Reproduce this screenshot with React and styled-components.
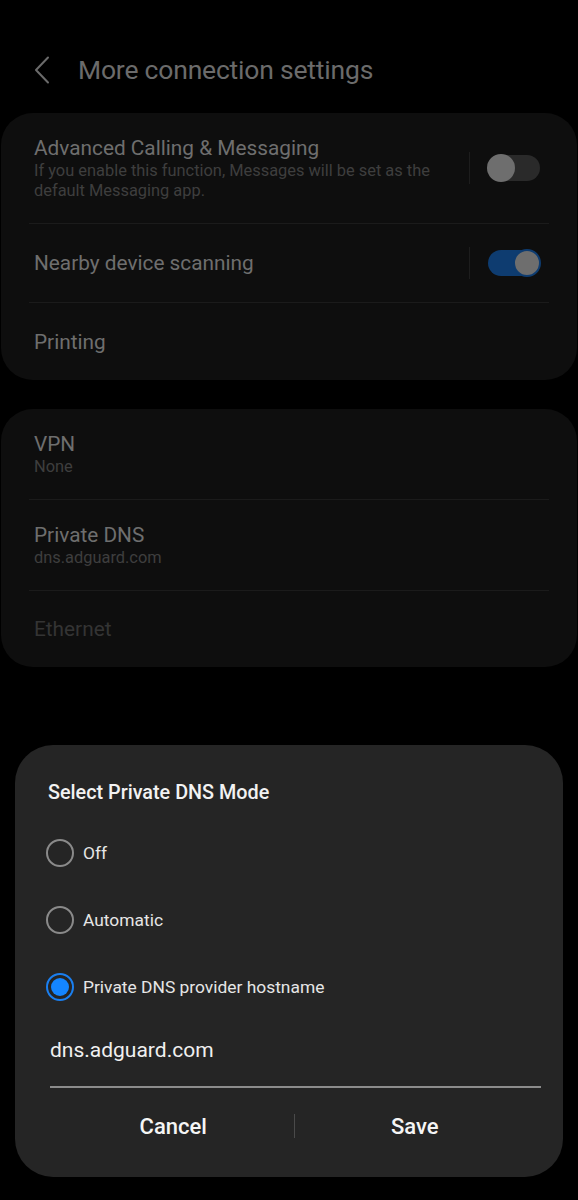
import styled, { createGlobalStyle } from 'styled-components';

const GlobalStyle = createGlobalStyle`
  html, body {
    margin: 0;
    padding: 0;
    background: #000;
  }
  body {
    font-family: Roboto, "Noto Sans", sans-serif;
  }
`;

const Page = styled.div`
  width: 578px;
  min-height: 1200px;
  background: #000;
  display: flex;
  flex-direction: column;
`;

const Header = styled.div`
  height: 113px;
  display: flex;
  align-items: center;
  padding-left: 33px;
  padding-top: 26px;
  box-sizing: border-box;
  gap: 27px;
`;

const Title = styled.h1`
  margin: 0;
  font-size: 26.5px;
  font-weight: 400;
  color: #6b6b6b;
  letter-spacing: -0.2px;
`;

const Card = styled.div`
  margin: ${p => p.mt || 0}px 1px 0;
  background: #0e0e0e;
  border-radius: 32px;
  padding: 0 28px;
  display: flex;
  flex-direction: column;
`;

const Row = styled.div`
  height: ${p => p.h}px;
  display: flex;
  align-items: center;
  border-top: ${p => (p.first ? 'none' : '1px solid #1b1b1b')};
  padding: 0 6px 0 5px;
  box-sizing: border-box;
`;

const RowText = styled.div`
  flex: 1;
  display: flex;
  flex-direction: column;
`;

const Label = styled.div`
  font-size: 20.8px;
  color: ${p => (p.dim ? '#343434' : '#6e6e6e')};
  line-height: 26px;
`;

const Sub = styled.div`
  font-size: 16.4px;
  color: #3e3e3e;
  line-height: 20px;
`;

const Sep = styled.div`
  width: 1px;
  height: 32px;
  background: #1d1d1d;
  margin: 0 18px 0 12px;
`;

const Track = styled.div`
  width: 52px;
  height: 26px;
  border-radius: 13px;
  background: ${p => (p.on ? '#0e3c70' : '#2a2a2a')};
  display: flex;
  align-items: center;
  justify-content: ${p => (p.on ? 'flex-end' : 'flex-start')};
  margin-right: 3px;
`;

const Knob = styled.div`
  width: 28px;
  height: 28px;
  border-radius: 50%;
  background: #6e6e6e;
  box-sizing: border-box;
  border: ${p => (p.on ? '2px solid #0e3c70' : 'none')};
  margin: 0 -1px;
`;

const Dialog = styled.div`
  margin: 78px 15px 0;
  background: #252525;
  border-radius: 38px;
  padding: 32px 22px 0 31px;
  height: 432px;
  box-sizing: border-box;
  display: flex;
  flex-direction: column;
`;

const DialogTitle = styled.div`
  font-size: 19.8px;
  font-weight: 500;
  color: #f2f2f2;
  padding-left: 2px;
  height: 32px;
  line-height: 32px;
  margin-bottom: 10px;
`;

const Option = styled.div`
  height: 67px;
  display: flex;
  align-items: center;
  gap: 9px;
  font-size: 17.4px;
  color: #e6e6e6;
`;

const Radio = styled.div`
  width: 28px;
  height: 28px;
  border-radius: 50%;
  box-sizing: border-box;
  border: 2px solid ${p => (p.checked ? '#1a7ff0' : '#8a8a8a')};
  display: flex;
  align-items: center;
  justify-content: center;
  &::after {
    content: '';
    display: ${p => (p.checked ? 'block' : 'none')};
    width: 18px;
    height: 18px;
    border-radius: 50%;
    background: #1485ff;
  }
`;

const Input = styled.div`
  margin: 14px 0 0 4px;
  height: 54px;
  display: flex;
  align-items: center;
  font-size: 21px;
  color: #f0f0f0;
  border-bottom: 2px solid #8c8c8c;
  padding-bottom: 20px;
  box-sizing: border-box;
`;

const Buttons = styled.div`
  display: flex;
  align-items: center;
  height: 76px;
  margin: 0 6px 0 7px;
`;

const Btn = styled.div`
  flex: 1;
  text-align: center;
  font-size: 22px;
  font-weight: 500;
  color: #f5f5f5;
`;

const BtnSep = styled.div`
  width: 1px;
  height: 24px;
  background: #4a4a4a;
`;

const Chevron = () => (
  <svg width="18" height="28" viewBox="0 0 18 28" fill="none">
    <path d="M15 1.5 L3 14 L15 26.5" stroke="#6b6b6b" strokeWidth="2" strokeLinecap="round" strokeLinejoin="round" />
  </svg>
);

const Toggle = ({ on }) => (
  <Track on={on}>
    <Knob on={on} />
  </Track>
);

export default function App() {
  return (
    <Page>
      <GlobalStyle />
      <Header>
        <Chevron />
        <Title>More connection settings</Title>
      </Header>

      <Card>
        <Row h={110} first>
          <RowText>
            <Label>Advanced Calling &amp; Messaging</Label>
            <Sub>If you enable this function, Messages will be set as the default Messaging app.</Sub>
          </RowText>
          <Sep />
          <Toggle />
        </Row>
        <Row h={79}>
          <RowText>
            <Label>Nearby device scanning</Label>
          </RowText>
          <Sep />
          <Toggle on />
        </Row>
        <Row h={78}>
          <RowText>
            <Label>Printing</Label>
          </RowText>
        </Row>
      </Card>

      <Card mt={29}>
        <Row h={90} first>
          <RowText>
            <Label>VPN</Label>
            <Sub>None</Sub>
          </RowText>
        </Row>
        <Row h={91}>
          <RowText>
            <Label>Private DNS</Label>
            <Sub>dns.adguard.com</Sub>
          </RowText>
        </Row>
        <Row h={77}>
          <RowText>
            <Label dim>Ethernet</Label>
          </RowText>
        </Row>
      </Card>

      <Dialog>
        <DialogTitle>Select Private DNS Mode</DialogTitle>
        <Option>
          <Radio />
          Off
        </Option>
        <Option>
          <Radio />
          Automatic
        </Option>
        <Option>
          <Radio checked />
          Private DNS provider hostname
        </Option>
        <Input>dns.adguard.com</Input>
        <Buttons>
          <Btn>Cancel</Btn>
          <BtnSep />
          <Btn>Save</Btn>
        </Buttons>
      </Dialog>
    </Page>
  );
}
